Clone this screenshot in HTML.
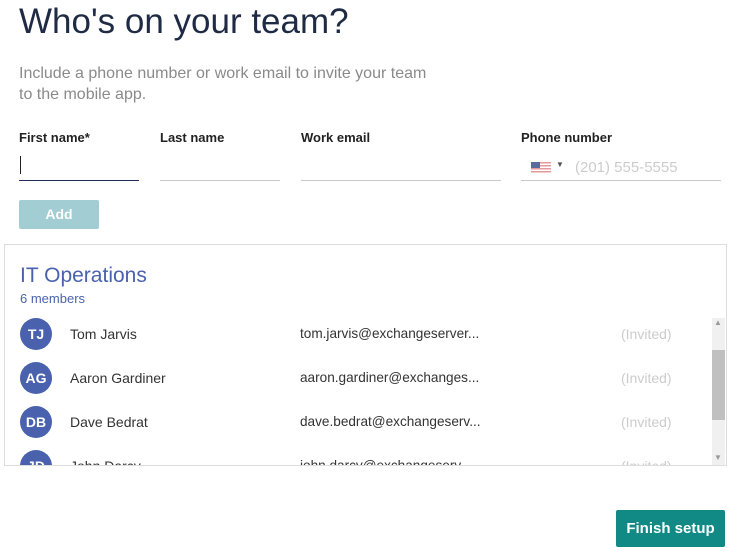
<!DOCTYPE html>
<html><head><style>
body{margin:0;width:731px;height:551px;background:#fff;font-family:"Liberation Sans",sans-serif;position:relative;overflow:hidden}
.a{position:absolute}
h1{position:absolute;left:19px;top:2px;margin:0;font-weight:normal;font-size:35px;color:#1f2a44}
.sub{left:19px;top:63px;font-size:16px;line-height:21px;color:#8a8a8a}
.lbl{top:130px;font-size:13px;font-weight:bold;color:#222}
.ln{top:180px;height:1px;background:#c8c8c8}
.box{left:4px;top:244px;width:721px;height:220px;border:1px solid #ddd;overflow:hidden}
.av{position:absolute;left:15px;width:32px;height:32px;border-radius:50%;background:#4a62ad;color:#fff;font-size:14px;font-weight:bold;text-align:center;line-height:32px}
.nm{position:absolute;left:65px;font-size:14px;color:#333}
.em{position:absolute;left:295px;font-size:13.6px;color:#333}
.iv{position:absolute;left:616px;font-size:14px;color:#ccc}
</style></head><body>
<h1>Who's on your team?</h1>
<div class="a sub">Include a phone number or work email to invite your team<br>to the mobile app.</div>
<div class="a lbl" style="left:19px">First name*</div>
<div class="a lbl" style="left:160px">Last name</div>
<div class="a lbl" style="left:301px">Work email</div>
<div class="a lbl" style="left:521px">Phone number</div>
<div class="a" style="left:20px;top:156px;width:1px;height:18px;background:#222"></div>
<div class="a ln" style="left:19px;width:120px;background:#1f2a5a"></div>
<div class="a ln" style="left:160px;width:120px"></div>
<div class="a ln" style="left:301px;width:200px"></div>
<div class="a ln" style="left:521px;width:200px"></div>
<div class="a" style="left:531px;top:162px;width:20px;height:11px;background:repeating-linear-gradient(#e49a9a 0 1.5px,#fff 1.5px 3px)"><div style="width:9px;height:6px;background:#5b6aa0"></div></div>
<div class="a" style="left:556px;top:160px;font-size:8px;color:#555">▼</div>
<div class="a" style="left:575px;top:159px;font-size:15px;color:#ccc">(201) 555-5555</div>
<div class="a" style="left:19px;top:200px;width:80px;height:29px;background:#a2cdd2;border-radius:2px;color:#fff;font-weight:bold;font-size:14px;text-align:center;line-height:29px">Add</div>
<div class="a box">
<div class="a" style="left:15px;top:19px;font-size:21px;color:#4a62ad">IT Operations</div>
<div class="a" style="left:15px;top:46px;font-size:13px;color:#4a62ad">6 members</div>
<div class="av" style="top:73px">TJ</div><div class="nm" style="top:81px">Tom Jarvis</div><div class="em" style="top:81px">tom.jarvis@exchangeserver...</div><div class="iv" style="top:81px">(Invited)</div>
<div class="av" style="top:117px">AG</div><div class="nm" style="top:125px">Aaron Gardiner</div><div class="em" style="top:125px">aaron.gardiner@exchanges...</div><div class="iv" style="top:125px">(Invited)</div>
<div class="av" style="top:161px">DB</div><div class="nm" style="top:169px">Dave Bedrat</div><div class="em" style="top:169px">dave.bedrat@exchangeserv...</div><div class="iv" style="top:169px">(Invited)</div>
<div class="av" style="top:205px">JD</div><div class="nm" style="top:213px">John Darcy</div><div class="em" style="top:213px">john.darcy@exchangeserv...</div><div class="iv" style="top:213px">(Invited)</div>
<div class="a" style="left:707px;top:73px;width:13px;height:148px;background:#f0f0f0"></div>
<div class="a" style="left:707px;top:105px;width:13px;height:70px;background:#c0c0c0"></div>
<div class="a" style="left:709px;top:73px;font-size:8px;color:#999">▲</div>
<div class="a" style="left:709px;top:208px;font-size:8px;color:#999">▼</div>
</div>
<div class="a" style="left:616px;top:510px;width:109px;height:37px;background:#118a86;border-radius:2px;color:#fff;font-weight:bold;font-size:15px;text-align:center;line-height:37px">Finish setup</div>
</body></html>
